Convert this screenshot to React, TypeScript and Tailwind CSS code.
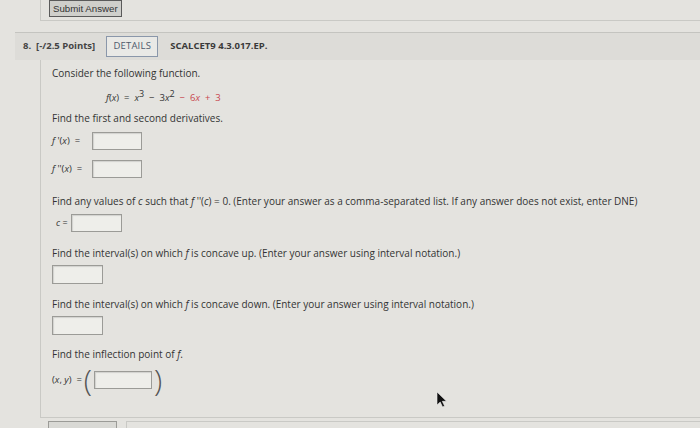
import React from 'react';

const AnswerBox = ({ w = 'w-[50px]', h = 'h-[18px]' }: { w?: string; h?: string }) => (
  <div className={`${w} ${h} border border-[#9b9b97] bg-[#eeeeea] shadow-[inset_1px_1px_1px_rgba(0,0,0,0.12)]`} />
);

const F = ({ children }: { children: React.ReactNode }) => <i className="italic">{children}</i>;

export default function App() {
  return (
    <div className="relative w-[700px] h-[428px] overflow-hidden bg-[#e4e3df] text-[#333] font-['Open_Sans',sans-serif] text-[10px]">
      {/* previous question footer */}
      <div className="ml-[40px] h-[21px] border-l border-b border-[#c9c9c5] pl-[8px]">
        <button className="h-[17px] px-[3px] border border-[#5a5a5a] bg-[#cfcfcb] text-[#333] font-['Liberation_Sans',sans-serif] text-[9.7px] leading-[15px]">
          Submit Answer
        </button>
      </div>

      {/* question header */}
      <div className="mt-[11px] ml-[15px] h-[28px] border-t border-[#c4c4c0] bg-[#dddcd8] flex items-center pl-[8px] text-[9.5px]">
        <span className="font-bold text-[#444]">8.&nbsp; [-/2.5 Points]</span>
        <span className="ml-[11px] h-[21px] w-[52px] flex items-center justify-center border border-[#8a97aa] bg-[#e9e9e6] text-[#4d5a6c] tracking-[0.2px]">
          DETAILS
        </span>
        <span className="ml-[12px] font-bold text-[#3a3a3a]">SCALCET9 4.3.017.EP.</span>
      </div>

      {/* question body */}
      <div className="ml-[40px] h-[358px] border-l border-b border-[#c9c9c5] pl-[11px]">
        <div className="pt-[6px] h-[20px] leading-[14px]">Consider the following function.</div>

        <div className="mt-[11px] ml-[54px] h-[14px] leading-[14px] text-[9.5px]">
          <F>f</F>(<F>x</F>) &nbsp;=&nbsp; <F>x</F>
          <sup className="text-[9px]">3</sup> &nbsp;−&nbsp; 3<F>x</F>
          <sup className="text-[9px]">2</sup> &nbsp;<span className="text-[#c8464f]">−&nbsp; 6<F>x</F> &nbsp;+&nbsp; 3</span>
        </div>

        <div className="mt-[6px] h-[14px] leading-[14px]">Find the first and second derivatives.</div>

        <div className="mt-[7px] flex items-center h-[18px]">
          <span className="w-[40px] text-[9.5px]">
            <F>f</F> '(<F>x</F>)&nbsp; =
          </span>
          <AnswerBox />
        </div>

        <div className="mt-[10px] flex items-center h-[18px]">
          <span className="w-[40px] text-[9.5px]">
            <F>f</F> ''(<F>x</F>)&nbsp; =
          </span>
          <AnswerBox />
        </div>

        <div className="mt-[16px] h-[14px] leading-[14px] whitespace-nowrap">
          Find any values of <F>c</F> such that <F>f</F> ''(<F>c</F>) = 0. (Enter your answer as a comma-separated list. If any answer does not exist, enter DNE)
        </div>

        <div className="mt-[6px] flex items-center h-[18px] pl-[4px]">
          <span className="w-[15px] text-[9px]">
            <F>c</F> =
          </span>
          <AnswerBox w="w-[51px]" />
        </div>

        <div className="mt-[14px] h-[14px] leading-[14px]">
          Find the interval(s) on which <F>f</F> is concave up. (Enter your answer using interval notation.)
        </div>
        <div className="mt-[5px]">
          <AnswerBox w="w-[51px]" h="h-[19px]" />
        </div>

        <div className="mt-[13px] h-[14px] leading-[14px]">
          Find the interval(s) on which <F>f</F> is concave down. (Enter your answer using interval notation.)
        </div>
        <div className="mt-[5px]">
          <AnswerBox w="w-[51px]" h="h-[19px]" />
        </div>

        <div className="mt-[12px] h-[14px] leading-[14px]">
          Find the inflection point of <F>f</F>.
        </div>

        <div className="mt-[5px] flex items-center h-[28px]">
          <span className="text-[9.5px]">
            (<F>x</F>, <F>y</F>)&nbsp; =
          </span>
          <span className="ml-[2px] text-[30px] font-light leading-[28px] text-[#555]">(</span>
          <span className="ml-[2px]">
            <AnswerBox w="w-[58px]" h="h-[18px]" />
          </span>
          <span className="ml-[2px] text-[30px] font-light leading-[28px] text-[#555]">)</span>
        </div>
      </div>

      {/* next section top edge */}
      <div className="mt-[3px] flex">
        <div className="ml-[48px] w-[69px] h-[12px] border border-[#9b9b97] bg-[#d9d9d5]" />
        <div className="ml-[9px] flex-1 h-[12px] border-l border-t border-[#c9c9c5]" />
      </div>

      {/* mouse pointer */}
      <svg className="absolute left-[436px] top-[391px]" width="12" height="17" viewBox="0 0 12 17">
        <path d="M1 1 L1 14 L4.2 11 L6.6 16 L8.6 15 L6.3 10.3 L10.5 10.3 Z" fill="#111" stroke="#eee" strokeWidth="0.6" />
      </svg>
    </div>
  );
}
